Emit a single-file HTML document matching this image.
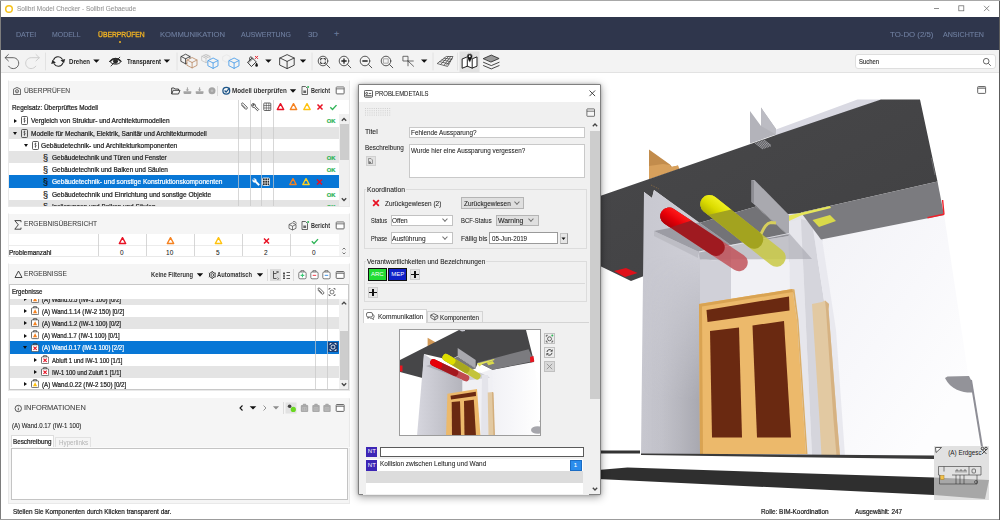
<!DOCTYPE html>
<html lang="de">
<head>
<meta charset="utf-8">
<title>Solibri Model Checker - Solibri Gebaeude</title>
<style>
*{box-sizing:border-box;margin:0;padding:0}
html,body{width:1000px;height:520px;overflow:hidden;background:#fff;font-family:"Liberation Sans",sans-serif;font-size:7.5px;color:#222}
.abs{position:absolute}
#titlebar{position:absolute;left:0;top:0;width:1000px;height:17px;background:#fff}
#titlebar .t{position:absolute;left:17px;top:4.5px;font-size:7px;color:#959595;white-space:nowrap}
#nav{position:absolute;left:0;top:17px;width:1000px;height:33px;background:#2f364c}
#nav span{position:absolute;top:12.5px;font-size:7.5px;color:#6f7f9f;white-space:nowrap}
#nav span.act{color:#f2b322;-webkit-text-stroke:0.3px}
#toolbar{position:absolute;left:0;top:50px;width:1000px;height:23px;background:#f3f3f3;border-bottom:1px solid #e2e2e2}
#main{position:absolute;left:0;top:73px;width:1000px;height:434px;background:#fff}
#leftcol{position:absolute;left:0;top:0;width:0;height:0}
#status{position:absolute;left:0;top:506px;width:1000px;height:14px;background:#fff}
#status span{position:absolute;top:1.8px;font-size:7px;color:#222;white-space:nowrap}
.panel{position:absolute;left:8px;width:340px;background:#fff;border:1px solid #e9e9e9;border-top-color:transparent;background-clip:padding-box}
.phead{position:absolute;left:0;top:0;width:100%;height:21px;background:#f5f5f5}
.ptitle{-webkit-text-stroke:0.05px;position:absolute;left:16px;top:6px;font-size:8px;color:#3a3a3a;white-space:nowrap}
.row{position:absolute;left:0;width:330px;height:12.2px;white-space:nowrap;font-size:6.8px;line-height:12.2px;color:#222}
.row.g{background:#e4e4e4}
.row.sel{background:#0877d6;color:#fff}
.tx{position:absolute;top:0;white-space:nowrap}
.ok{position:absolute;left:317.8px;top:0;font-size:5.8px;font-weight:bold;color:#2fb457}
.vline{position:absolute;width:1px;background:rgba(200,200,200,.72)}
.num{width:48px;text-align:center;font-size:6.5px;-webkit-text-stroke:0.05px}
.ric{position:absolute;top:2px;width:8px;height:8px;border:1px solid #555;border-radius:1.5px;background:#fff}
.ric:before{content:"";position:absolute;left:1.5px;top:-2.5px;width:3px;height:1.5px;border:0.7px solid #555;border-bottom:none;border-radius:1px 1px 0 0}
.ric:after{content:"";position:absolute;left:1px;top:1px;width:4px;height:4px;border-radius:0.5px}
.ric.o:after{background:#f58220}.ric.r:after{background:#e81123}.ric.y:after{background:#ffc20e}
.lb{font-size:6.6px;color:#1a1a1a;white-space:nowrap}
.gl{background:#f0f0f0;padding:0 1px}
.grp{border:1px solid #dcdcdc}
.inp{background:#fff;border:1px solid #c9c9c9;overflow:hidden}
.inp span{position:absolute;font-size:6.6px;color:#1a1a1a;white-space:nowrap}
.cmb{background:#fff;border:1px solid #c2c2c2}
.cmb.g{background:#dfdfdf;border-color:#b4b4b4}
.cmb span{position:absolute;left:3px;top:1.5px;font-size:6.6px;color:#1a1a1a;white-space:nowrap}
.cmb i{position:absolute;right:4.5px;top:1.8px;width:3.9px;height:3.9px;border-right:0.65px solid #6e6e6e;border-bottom:0.65px solid #6e6e6e;transform:rotate(45deg)}
.tag{-webkit-text-stroke:0;border:1.2px solid #111;color:#fff;font-size:6px;line-height:10.6px;text-align:center}
.plus{width:10.5px;height:10.5px;background:#e6e6e6;border:1px solid #cfcfcf}
.plus:before{content:"";position:absolute;left:0.6px;top:3.5px;width:7.3px;height:1.5px;background:#111}
.plus:after{content:"";position:absolute;left:3.5px;top:0.6px;width:1.5px;height:7.3px;background:#111}
.sbtn{width:11px;height:11px;background:#ececec;border:1px solid #c0c0c0}
.nt{width:11px;height:9.700px;background:#3c25b5;color:#fff;font-size:6px;line-height:9.700px;text-align:center;-webkit-text-stroke:0}
.ar{position:absolute;width:0;height:0;border-style:solid}
.row .tx{top:1px}
.row .ok{top:1px}
body{-webkit-text-stroke:0.22px}
#nav span,#titlebar .t{-webkit-text-stroke:0.1px}
[style*="font-weight:bold"]{-webkit-text-stroke:0}
#dlg{-webkit-text-stroke:0.06px}
</style>
</head>
<body>
<div id="titlebar">
 <svg class="abs" style="left:4px;top:4px" width="10" height="10" viewBox="0 0 10 10"><circle cx="5" cy="5" r="3.3" fill="none" stroke="#f5c21c" stroke-width="1.5"/></svg>
 <div style="left:16.8px;transform-origin:0 0;transform:scaleX(0.924)" class="t">Solibri Model Checker - Solibri Gebaeude</div>
 <svg class="abs" style="left:930px;top:2px" width="70" height="13" viewBox="0 0 70 13"><g stroke="#6a6a6a" stroke-width="0.750" fill="none"><path d="M4 6.500h5"/><rect x="28.800" y="3.800" width="5" height="5"/><path d="M54 3.800l5.300 5.300m0-5.300l-5.300 5.300"/></g></svg>
</div>
<div id="nav">
 <span style="left:16.3px;transform-origin:0 0;transform:scaleX(0.940)">DATEI</span>
 <span style="left:52.0px;transform-origin:0 0;transform:scaleX(0.924)">MODELL</span>
 <span class="act" style="left:97.5px;transform-origin:0 0;transform:scaleX(0.904)">ÜBERPRÜFEN</span>
 <span style="left:160.0px;transform-origin:0 0;transform:scaleX(1.022)">KOMMUNIKATION</span>
 <span style="left:241.0px;transform-origin:0 0;transform:scaleX(0.925)">AUSWERTUNG</span>
 <span style="left:307.5px;transform-origin:0 0;transform:scaleX(1.042)">3D</span>
 <span style="left:334px;top:11.800px;font-size:9px">+</span>
 <span style="left:889.5px;transform-origin:0 0;transform:scaleX(1.047)">TO-DO (2/5)</span>
 <span style="left:942.5px;transform-origin:0 0;transform:scaleX(0.946)">ANSICHTEN</span>
 <div class="abs" style="left:119px;top:24px;width:2px;height:2px;border-radius:1px;background:#f2b322"></div>
</div>
<div id="toolbar"><!--TB--><svg class="abs" style="left:0;top:0" width="520" height="23" viewBox="0 50 520 23" fill="none" stroke-linecap="round" stroke-linejoin="round">
 <!-- map active bg -->
 <rect x="459.500" y="51.500" width="20" height="20.500" fill="#e2e2e2" stroke="none"/>
 <!-- undo / redo -->
 <g stroke="#555" stroke-width="0.900">
  <path d="M5.200 57.700H13.200A5.500 5.500 0 1 1 8.600 66.200"/><path d="M8.400 54.500L5.100 57.700L8.400 60.900"/>
 </g>
 <g stroke="#c9c9c9" stroke-width="0.900">
  <path d="M39.200 57.700H31.200A5.500 5.500 0 1 0 35.800 66.200"/><path d="M36 54.500L39.300 57.700L36 60.900"/>
 </g>
 <path d="M45.500 53v17M177 53v17M312 53v17M433 53v17M457.500 53v17" stroke="#e2e2e2" stroke-width="1"/>
 <!-- rotate -->
 <g stroke="#2a2a2a" stroke-width="1.100">
  <path d="M53.600 59.900A4.800 4.800 0 0 1 62.300 59.200"/><path d="M62.800 63.100A4.800 4.800 0 0 1 54.100 63.800"/>
 </g>
 <path d="M60.500 60.300L65.200 58.900L64 63.200zM55.900 62.700L51.200 64.100L52.400 59.800z" fill="#2a2a2a" stroke="none"/>
 <!-- eye -->
 <g stroke="#2a2a2a" stroke-width="1">
  <path d="M109.800 61.500c2.400-4 9-4 11.400 0c-2.400 3.600-9 3.600-11.400 0z"/><path d="M110.500 61c2.400-3.200 7.600-3.200 10 0" stroke-width="1.600"/><circle cx="115.500" cy="61.300" r="2" fill="#2a2a2a"/><path d="M111 66l8.800-8.800" stroke-width="0.900"/>
 </g>
 <!-- cubes -->
 <g stroke-width="0.800">
  <g stroke="#2b2b2b"><path d="M181.200 56.500l4.400-2.300l4.400 2.300v5l-4.400 2.300l-4.400-2.300zM181.200 56.500l4.400 2.300l4.400-2.300M185.600 58.800v5"/></g>
  <g stroke="#b98660" fill="#f3f3f3"><path d="M187.200 60l4.900-2.500l4.900 2.500v5.400l-4.900 2.500l-4.900-2.500z"/><path d="M187.200 60l4.900 2.500l4.900-2.500M192.100 62.500v5.400"/></g>
  <g stroke="#bdbdbd" stroke-width="0.700"><path d="M202 56.300l4-2l4 2v4.400l-4 2l-4-2zM202 56.300l4 2l4-2M206 58.300v4.400M204 55.300l4 2M208 55.300l-4 2"/></g>
  <g stroke="#3b96e8" fill="#f3f3f3"><path d="M208.200 60.500l4.900-2.500l4.900 2.500v5.400l-4.900 2.500l-4.900-2.500z"/><path d="M208.200 60.500l4.900 2.500l4.900-2.500M213.100 63v5.400"/></g>
  <g stroke="#e4e4e4" stroke-width="0.700"><path d="M223 56.500l3.600-1.800l3.600 1.800v4l-3.600 1.800l-3.600-1.800z"/></g>
  <g stroke="#3b96e8" fill="#f3f3f3"><path d="M229.200 60.500l4.900-2.500l4.900 2.500v5.400l-4.900 2.500l-4.900-2.500z"/><path d="M229.200 60.500l4.900 2.500l4.900-2.500M234.100 63v5.400"/></g>
 </g>
 <!-- hand -->
 <g stroke="#2b2b2b" stroke-width="0.900">
  <path d="M247.800 62L252.300 57.900L256.200 61.900L251.700 66.300z" fill="#f3f3f3"/>
  <path d="M249.800 60.200C248.800 57.300 250.600 55.600 252.200 57.800"/>
  <path d="M248.600 62.700L252.800 58.800" stroke-width="0.600"/>
 </g>
 <path d="M256.600 62.500c1 1.500 1.300 2.300 1.300 3a1.300 1.300 0 0 1-2.600 0c0-0.700 0.300-1.500 1.300-3z" fill="#1a1a1a" stroke="none"/>
 <path d="M255.300 56.200l2.400 2.400m0-2.400l-2.400 2.400" stroke="#e8222e" stroke-width="1"/>
 <!-- big cube -->
 <g stroke="#333" stroke-width="0.900"><path d="M280 58l7.100-3.400l7.100 3.400v7.200l-7.100 3.400l-7.100-3.400zM280 58l7.100 3.400l7.100-3.400M287.100 61.400v7.200"/></g>
 <!-- zoom icons -->
 <g stroke="#444" stroke-width="0.900">
  <circle cx="323" cy="61" r="4.800"/><path d="M326.600 64.600l3.200 3.200"/>
  <path d="M320.700 60v-1.400h1.400M325.300 60v-1.400h-1.400M320.700 62v1.400h1.400M325.300 62v1.400h-1.400" stroke-width="1" stroke="#2a2a2a"/>
  <circle cx="344" cy="61" r="4.800"/><path d="M347.600 64.600l3.200 3.200"/><path d="M341.800 61h4.400M344 58.800v4.400" stroke-width="1.300" stroke="#222"/>
  <circle cx="365" cy="61" r="4.800"/><path d="M368.600 64.600l3.200 3.200"/><path d="M362.800 61h4.400" stroke-width="1.300" stroke="#222"/>
  <circle cx="386" cy="61" r="4.800"/><path d="M389.600 64.600l3.200 3.200"/><rect x="383.800" y="58.800" width="4.400" height="4.400" stroke-width="0.700" stroke="#888"/>
 </g>
 <!-- axis picker -->
 <g stroke="#4a4a4a" stroke-width="0.800"><rect x="403.300" y="56.300" width="4.700" height="4.700"/><path d="M408 61l5.600 5.300M408 61h5.300M408 61v4.800"/></g>
 <!-- grid plane -->
 <g stroke="#3a3a3a" stroke-width="0.700"><path d="M437.500 63.300l8.800-6.800h6.700l-5.200 9.600z"/><path d="M439.700 61.600l9.300 2.300M441.900 59.900l8.500 1.700M444.100 58.200l7.700 1.100M448.500 56.500l-7.600 7.700M450.700 56.500l-6.500 8.600M452 58.500l-5.500 6.500"/></g>
 <!-- map (active) -->
 <g stroke="#222" stroke-width="1"><path d="M462.500 58.800l4.800-1.900v9.300l-4.800 1.900zM467.300 56.900l4.900 1.900l4.800-1.900v9.300l-4.800 1.900l-4.900-1.900M472.200 58.800v9.300" fill="#fff"/></g>
 <path d="M469.700 53.600a2.800 2.800 0 0 1 2.800 2.800c0 2-2.800 5.800-2.800 5.800s-2.800-3.800-2.800-5.800a2.800 2.800 0 0 1 2.800-2.800z" fill="#111" stroke="#e3e3e3" stroke-width="0.500"/><circle cx="469.700" cy="56.300" r="1" fill="#fff" stroke="none"/>
 <!-- layers -->
 <g stroke="#333" stroke-width="0.900"><path d="M483.500 62.300l7.800 3.300l7.800-3.300M483.500 65.600l7.800 3.300l7.800-3.300" /><path d="M483.500 58.500l7.800-3.400l7.800 3.400l-7.800 3.400z" fill="#9a9a9a"/></g>
 <!-- dropdown arrows -->
 <g fill="#111" stroke="none">
  <path d="M93.200 59.500h6.400l-3.200 3.300zM163.700 59.500h6.400l-3.200 3.300zM265.200 59.500h6.400l-3.200 3.300zM299.800 59.500h6.400l-3.200 3.300zM421 59.500h6.400l-3.200 3.300z"/>
 </g>
</svg>
<span class="abs" style="left:69.0px;top:7.500px;font-size:6.800px;font-weight:bold;color:#222;transform-origin:0 0;transform:scaleX(0.897)">Drehen</span>
<span class="abs" style="left:126.8px;top:7.500px;font-size:6.800px;font-weight:bold;color:#222;transform-origin:0 0;transform:scaleX(0.874)">Transparent</span>
<div class="abs" style="left:855px;top:4px;width:141px;height:15px;background:#fff;border:1px solid #dedede;border-radius:3px"></div>
<span class="abs" style="left:859.0px;top:8px;font-size:6.500px;color:#444;transform-origin:0 0;transform:scaleX(0.907)">Suchen</span>
<svg class="abs" style="left:982px;top:7px" width="10" height="10" viewBox="0 0 10 10" fill="none" stroke="#555" stroke-width="0.900"><circle cx="4.200" cy="4.200" r="2.800"/><path d="M6.300 6.300l2.500 2.500"/></svg>
<!--/TB--></div>
<div id="main"><!--SC--><svg class="abs" style="left:350px;top:0" width="650" height="434" viewBox="350 73 650 434">
 <defs>
  <linearGradient id="gWallL" x1="0" y1="0" x2="1" y2="0"><stop offset="0" stop-color="#c8c8d0"/><stop offset="1" stop-color="#ceced6"/></linearGradient><linearGradient id="gWallD" x1="0" y1="0" x2="1" y2="0"><stop offset="0" stop-color="#a2a2aa" stop-opacity="0"/><stop offset="0.350" stop-color="#a8a8b0" stop-opacity="0.250"/><stop offset="1" stop-color="#a8a8b0" stop-opacity="1"/></linearGradient><linearGradient id="gMaskV" gradientUnits="userSpaceOnUse" x1="0" y1="255" x2="0" y2="400"><stop offset="0" stop-color="#000"/><stop offset="1" stop-color="#fff"/></linearGradient><mask id="mWall" maskUnits="userSpaceOnUse" x="640" y="190" width="62" height="270"><rect x="640" y="190" width="62" height="270" fill="url(#gMaskV)"/></mask>
  <linearGradient id="gWallLT" x1="0" y1="0" x2="0" y2="1"><stop offset="0" stop-color="#d4d4dc" stop-opacity="0.9"/><stop offset="1" stop-color="#d4d4dc" stop-opacity="0"/></linearGradient>
  <linearGradient id="gWallR" x1="0" y1="0" x2="1" y2="0.6"><stop offset="0" stop-color="#eeeef3"/><stop offset="0.7" stop-color="#f8f8fb"/><stop offset="1" stop-color="#fdfdfe"/></linearGradient>
  <linearGradient id="gSlab" x1="0" y1="0" x2="1" y2="1"><stop offset="0" stop-color="#48484a"/><stop offset="1" stop-color="#404042"/></linearGradient>
  <linearGradient id="gRed" gradientUnits="userSpaceOnUse" x1="664" y1="224" x2="674" y2="209"><stop offset="0" stop-color="#b00008"/><stop offset="0.5" stop-color="#e60008"/><stop offset="1" stop-color="#ff1a1a"/></linearGradient>
  <linearGradient id="gYel" gradientUnits="userSpaceOnUse" x1="704" y1="212" x2="715" y2="197"><stop offset="0" stop-color="#b4b400"/><stop offset="0.5" stop-color="#dcdc00"/><stop offset="1" stop-color="#f0f020"/></linearGradient>
  <clipPath id="cpY"><path d="M690 170H770V200.300L690 219.200z"/></clipPath><clipPath id="cpR"><path d="M650 190H705V216L650 234.300z"/></clipPath>
 </defs>
 <!-- far/right wall -->
 <path d="M821 239L944 214L975 420L981 456L700 454L700 245z" fill="url(#gWallR)"/>
 <!-- things behind slab -->
 <path d="M776 129.500L857.500 99.500H882L776 136z" fill="#d9d9e2"/>
 <path d="M750 111V143.500L776 134.500V129L761 107.500V126z" fill="#b3b3ba"/>
 <path d="M761 126V107.500L776 129V134.500z" fill="#bcbcc3"/>
 <path d="M649 149.500V179L679 169L678 165.500L672 167L670 164.500z" fill="#c28c4c"/>
 <path d="M649 166l14-2l7 1l0.500 2l7.500-1.500l1 3.500l-30 10z" fill="#d7a05c"/>
 <!-- dark slab -->
 <path d="M600 196L752 143.500L776 135L881 99.500H920L937.500 181.500L801 212.500L789 236L756 206.500L699 223L654 190L652 198L644 192V276L631 281L600 266z" fill="url(#gSlab)"/>
 <g stroke="#b4b4ba" stroke-width="0.800"><path d="M755 143l8 6M756.500 142.500l8 6M758 142l8 6M759.500 141.500l8 6M761 141l8 6M762.500 140.500l8 6M764 140l7 5.500"/></g>
 <path d="M651 185l8 4" stroke="#b08040" stroke-width="0.500" stroke-dasharray="1.500 1.200"/>
 <path d="M931.500 158L935 175" stroke="#77777a" stroke-width="0.800"/>
 <!-- red marker on slab left -->
 <path d="M614 271L626 268L637.500 273L625 277z" fill="#e0101a"/>
 <!-- left wall -->
 <path d="M644 192L652 198L654 190L700 223V454H641z" fill="url(#gWallL)"/>
 <path d="M644 192L652 198L654 190L700 223V454H641z" fill="url(#gWallD)" mask="url(#mWall)"/>
 <!-- underside recess -->
 <path d="M699 223L756 206.500L789 236L730 245.500z" fill="#737377"/>
 <path d="M700 223L731 245L731 262L700 259z" fill="#c2c2ca"/>
 <!-- reveal / far wall pieces -->
 <path d="M700 259L731 262L731 300L700 305z" fill="#d0d0d8"/>
 <path d="M731 245L789 236L790 290L731 300z" fill="#f1f1f5"/>
 <!-- pillar strips -->
 <path d="M788 214L803 213L823 240L812 262L789 262z" fill="#e3e3e9"/>
 <path d="M789 222L801 219L812 456H797L790 300z" fill="#e6e6ec"/>
 <path d="M801 219L812 222L827 320L835 456H812z" fill="#d5d5dc"/>
 <path d="M812 222L822 239L836 330L845 456H835L827 320z" fill="#e9e9ef"/>
 <!-- tan strip -->
 <path d="M812 304L822 302L825 300.500L829 304L828.500 309L837 420L840 456H821.500L819.500 420z" fill="#e2c9a2"/>
 <path d="M825 300.500L829 304L828.500 309L837 420L840 456H836.500L833.500 420L826 310z" fill="#d6b282"/>
 <!-- front grey band of slab -->
 <path d="M801 212.500L937.500 181.500L944 215L821 239.500z" fill="#7b7b7f"/>
 <path d="M787 216L830 206L831 208L801 215.500L789 221z" fill="#e6e65a"/>
 <path d="M812.500 220L830 215L836 221L819 227z" fill="#d9d94a"/>
 <path d="M927.500 217.800L944 214.300M942.600 200L944 214.500" stroke="#f0202a" stroke-width="1.400" fill="none"/>
 <!-- grey vertical panel -->
 <path d="M751.500 180V202L789 236V215L754.500 180z" fill="#a9a9af"/>
 <path d="M751.500 180V202L754 204V181z" fill="#8e8e94"/>
 <!-- semi-transparent horizontal slab -->
 <path d="M654 231L699 222.500L731 245L698 251.500z" fill="#77777d" fill-opacity="0.550"/>
 <path d="M654 231L698 251.500V258L654 236z" fill="#b9b9c1" fill-opacity="0.800"/>
 <path d="M698 251.500L789 233L812 259L700 259.500z" fill="#a6a6ae" fill-opacity="0.620"/>
 <path d="M699 252L789 233.500" stroke="#f4f4f8" stroke-width="0.700"/>
 <!-- small yellow pipe -->
 <path d="M760 236C764 228 766 223 771 222.500L776 223" fill="none" stroke="#d6ce5c" stroke-width="3"/>
 <!-- yellow pipe -->
 <path d="M709.500 204.200L776.500 257.500" stroke="#c9c944" stroke-opacity="0.850" stroke-width="18.500" stroke-linecap="round"/>
 <path d="M709.500 204.200L754 239.500" stroke="#a3a31f" stroke-width="18.500" stroke-linecap="round"/>
 <g clip-path="url(#cpY)"><path d="M709.500 204.200L754 239.500" stroke="url(#gYel)" stroke-width="18.500" stroke-linecap="round"/></g>
 <!-- red pipe -->
 <path d="M669 216.300L739 262.500" stroke="#c2535a" stroke-opacity="0.850" stroke-width="17.500" stroke-linecap="round"/>
 <path d="M669 216.300L716 247.300" stroke="#9f1a20" stroke-width="17.500" stroke-linecap="round"/>
 <g clip-path="url(#cpR)"><path d="M669 216.300L716 247.300" stroke="url(#gRed)" stroke-width="17.500" stroke-linecap="round"/></g>
 <!-- door -->
 <path d="M699 304L792.500 289L797 320L806 454H700z" fill="#ecb96b"/>
 <path d="M699 304L792.500 289L793 292L702 306.500L703 454H700z" fill="#d9a352"/>
 <path d="M706.500 310L789 296.500L789.500 310.500L707.500 322z" fill="#6a2911"/>
 <path d="M710 331L739 327.500L742 437.500H712z" fill="#6a2911"/>
 <path d="M752.500 325.500L784 321L791 437.500H757z" fill="#6a2911"/>
 <path d="M792.500 289L794.500 289.500L798.500 320L807.500 454H806L797 320z" fill="#dcae66"/>
 <!-- lamp -->
 <path d="M945 378L947.500 376.500L969 376L971 380L972.500 392.500C965 393 951 391 945 378z" fill="#939399"/>
 <path d="M971 380L982 447" stroke="#8e8e96" stroke-width="2"/>
 <!-- floor lines -->
 <path d="M598 450.500H640V453.500H598z" fill="#333"/>
 <path d="M641 453.500L934 455.500V459L641 455z" fill="#3a3a3a"/>
 <path d="M598 470L627.500 467.500L934 477.500L989 480L985 499L934 495L598 479z" fill="#2f2f2f"/>
 <!-- minimap overlay -->
 <rect x="934" y="446" width="55" height="54" fill="#d6d6d6" fill-opacity="0.720"/>
 <path d="M935.500 447.500h6l-5.500 5z" fill="#fff" stroke="#222" stroke-width="0.700"/>
 <g fill="none" stroke="#333" stroke-width="0.600"><path d="M938.500 466.500h42.500v8.500h-4v9h-37.500v-9h-1z"/><path d="M944 466.500v5M956 475v9M960 475v9M964 475v9M969 466.500v8.500M952 475h25"/><rect x="972" y="469" width="3.500" height="4" rx="1"/><path d="M956 472.500v-2.500h2v2.500M960 472.500v-2.500h2v2.500M964 472.500v-2.500h2v2.500"/><circle cx="976" cy="482" r="1.500"/></g>
 <rect x="940.500" y="475.500" width="3.500" height="4" fill="#f2c24a" stroke="#a87a1a" stroke-width="0.500"/>
 <text x="948.2" y="454.800" font-family="Liberation Sans, sans-serif" font-size="6.800" textLength="33.500" lengthAdjust="spacingAndGlyphs" fill="#222">(A) Erdgesc</text>
 <g stroke="#222" stroke-width="0.800" fill="none"><circle cx="982.500" cy="448.500" r="1.300"/><circle cx="986" cy="448.500" r="1.300"/><path d="M982 454l4.500-4.500M986.500 454l-4.500-4.500"/></g>
</svg>
<svg class="abs" style="left:975.5px;top:10.8px" width="12" height="12" viewBox="0 0 12 12"><use href="#i-win" x="1.500" y="2"/></svg>
<!--/SC--></div>
<div id="leftcol"><!--L1--><svg width="0" height="0" style="position:absolute">
 <defs>
  <g id="i-win"><rect x="0.200" y="0.500" width="7.900" height="6.900" rx="0.700" fill="#fff" stroke="#555" stroke-width="0.900"/><path d="M0.600 1.500h7.100" stroke="#c8c8c8" stroke-width="1.100"/><path d="M0.200 2.400h7.900" stroke="#555" stroke-width="0.700"/></g>
  <g id="i-tri"><path d="M4 1.200L7.200 7H0.800z" fill="none" stroke-width="1.400" stroke-linejoin="round"/></g>
  <g id="i-x"><path d="M1 1l5 5m0-5l-5 5" fill="none" stroke="#e81123" stroke-width="1.500"/></g>
  <g id="i-chk"><path d="M0.800 3.800l2.200 2.200l4-4.400" fill="none" stroke="#2fb457" stroke-width="1.400"/></g>
  <g id="i-rep"><path d="M0.500 0.500h3.500l2 2v6h-5.500z" fill="none" stroke="#444" stroke-width="0.800"/><path d="M1.800 4.500h2.800v2.500h-2.800z" fill="#666"/><circle cx="6.600" cy="1" r="1" fill="#2fb457"/></g>
  <g id="i-rs"><rect x="0.500" y="0.500" width="6" height="8" rx="1" fill="none" stroke="#333" stroke-width="0.800"/><path d="M4.300 2.500c-1.500-0.800-2 0.800-0.800 1.400c1.200 0.600 0.800 2.200-0.800 1.400M3.500 1.800v5" fill="none" stroke="#333" stroke-width="0.600"/></g>
  <g id="i-clip"><path d="M1.500 2.200l3.800 3.800a1.300 1.300 0 0 0 1.800-1.800l-4-4a0.900 0.900 0 0 0-1.300 1.300l3.600 3.600" fill="none" stroke="#4a4a4a" stroke-width="0.850" transform="translate(0 1)"/></g>
  <g id="i-wr"><path d="M1 1.300a2 2 0 0 1 2.800 2.300l3.400 3.400l-1.200 1.200l-3.400-3.400a2 2 0 0 1-2.300-2.800l1.300 1.300l1-1z" fill="none" stroke="#3a3a3a" stroke-width="0.900"/></g>
  <g id="i-tbl"><rect x="0.500" y="0.500" width="7" height="7.500" rx="0.800" fill="none" stroke="#444" stroke-width="0.800"/><path d="M0.500 3h7M0.500 5.500h7M3 0.500v7.500M5.500 0.500v7.500" stroke="#444" stroke-width="0.600"/></g>
  <g id="i-fold"><rect x="0.500" y="1.500" width="7" height="6.500" rx="0.800" fill="#fff" stroke="#555" stroke-width="0.700"/><path d="M2 1.500v-1h4v1" fill="none" stroke="#555" stroke-width="0.700"/></g>
  <g id="i-cb"><rect x="0.300" y="1.500" width="7.400" height="7" rx="1.100" fill="#a8a8a8"/><rect x="2.300" y="0.200" width="3.400" height="2" rx="0.600" fill="#a8a8a8"/><path d="M2 4h4v3.200h-4zM2 5.600h4M4 4v3.200" stroke="#c4c4c4" stroke-width="0.500" fill="none"/></g>
  <g id="i-cbo"><rect x="0.500" y="2" width="8" height="7.500" rx="1.200" fill="#fff" stroke="#333" stroke-width="0.800"/><path d="M2.800 2v-1.300h3.400v1.300" fill="none" stroke="#333" stroke-width="0.800"/><path d="M4.500 3.600l2.300 4.300h-4.600z" fill="#f58220"/></g>
  <g id="i-cby"><rect x="0.500" y="2" width="8" height="7.500" rx="1.200" fill="#fff" stroke="#333" stroke-width="0.800"/><path d="M2.800 2v-1.300h3.400v1.300" fill="none" stroke="#333" stroke-width="0.800"/><path d="M4.500 3.600l2.300 4.300h-4.600z" fill="#ffc20e"/></g>
  <g id="i-cbr"><rect x="0.500" y="2" width="8" height="7.500" rx="1.200" fill="#fff" stroke="#333" stroke-width="0.800"/><path d="M2.800 2v-1.300h3.400v1.300" fill="none" stroke="#333" stroke-width="0.800"/><path d="M2.700 4l3.600 3.600m0-3.600l-3.600 3.600" fill="none" stroke="#e81123" stroke-width="1.200"/></g>
 </defs>
</svg>
<!-- ============ PANEL 1 ============ -->
<div class="panel" style="left:8px;top:80px;width:342px;height:126.500px;overflow:hidden">
 <div class="phead" style="height:19.2px"></div>
 <svg class="abs" style="left:4px;top:5.5px" width="8" height="8" viewBox="0 0 9 9" fill="none" stroke="#444" stroke-width="0.900"><path d="M0.500 2.500l4-2l4 2v6h-8z"/><circle cx="4.500" cy="4.800" r="1.800"/><path d="M3.600 4.800l0.700 0.700l1.200-1.300" stroke-width="0.600"/></svg>
 <div class="ptitle" id="t1" style="left:15.0px;top:4.800px;transform-origin:0 0;transform:scaleX(0.838)">ÜBERPRÜFEN</div>
 <!-- header icons -->
 <svg class="abs" style="left:160px;top:4px" width="182" height="12" viewBox="168 85 182 12" fill="none">
  <path d="M170.700 94v-6h2.400l1 1h3.400v1.300M170.700 94l1.500-3.700h6.800l-1.500 3.700z" stroke="#333" stroke-width="0.900" stroke-linejoin="round"/>
  <g fill="#a4a4a4"><path d="M182.500 91.300h7.800v1.500q0 1.200-1.200 1.200h-5.400q-1.200 0-1.200-1.200z"/><rect x="185.900" y="87.300" width="1" height="3.500"/><path d="M184.600 89.400h3.600l-1.800 1.900z"/>
  <path d="M194.700 91.300h7.800v1.500q0 1.200-1.200 1.200h-5.400q-1.200 0-1.200-1.200z"/><rect x="198.100" y="87.300" width="1" height="3.500"/><path d="M196.800 89.400h3.600l-1.800 1.900z"/><circle cx="211" cy="90.700" r="3.500"/></g><circle cx="211" cy="90.700" r="1.300" fill="#bdbdbd"/>
  <path d="M216.500 86v10" stroke="#dcdcdc" stroke-width="1"/>
  <circle cx="225.300" cy="90.800" r="3.400" stroke="#1d5588" stroke-width="1.300"/><path d="M223.600 90.500l1.500 1.600l3.600-4.200" stroke="#1d5588" stroke-width="1.300"/>
  <path d="M288.800 89.300h6.400l-3.200 3.400z" fill="#111"/>
  <use href="#i-rep" x="300.500" y="86"/>
  <use href="#i-win" x="335" y="86.500"/>
 </svg>
 <span class="abs" id="t1a" style="font-weight:bold;left:222.5px;top:6px;font-size:6.500px;color:#333;white-space:nowrap;transform-origin:0 0;transform:scaleX(0.965)">Modell überprüfen</span>
 <span class="abs" id="t1b" style="font-weight:bold;left:302.4px;top:6px;font-size:6.500px;color:#333;white-space:nowrap;transform-origin:0 0;transform:scaleX(0.852)">Bericht</span>
 <!-- column header row -->
 <div class="abs" style="left:0;top:19.2px;width:330px;height:14.2px;background:#fff"></div>
 <span class="abs" id="t1c" style="left:2.8px;top:23px;font-size:6.800px;color:#222;white-space:nowrap;transform-origin:0 0;transform:scaleX(0.941)">Regelsatz: Überprüftes Modell</span>
 <svg class="abs" style="left:230px;top:21px" width="100" height="10" viewBox="238 102 100 10" fill="none">
  <use href="#i-clip" x="239" y="102"/><use href="#i-wr" x="250.500" y="102.500"/><use href="#i-tbl" x="262.300" y="102.500"/>
  <use href="#i-tri" x="275.500" y="102.500" stroke="#e81123"/><use href="#i-tri" x="288.500" y="102.500" stroke="#f58220"/><use href="#i-tri" x="302" y="102.500" stroke="#ffc20e"/>
  <use href="#i-x" x="315.500" y="103.500"/><use href="#i-chk" x="328.500" y="103.500"/>
 </svg>
 <!-- rows -->
 <div class="row" style="top:33.4px"><i class="ar" style="left:4.5px;top:4.4px;border-width:2.2px 0 2.2px 3.6px;border-color:transparent transparent transparent #111"></i><svg class="abs" style="left:12px;top:2px" width="7" height="9"><use href="#i-rs"/></svg><span class="tx" id="r1" style="left:21.6px;transform-origin:0 0;transform:scaleX(0.965)">Vergleich von Struktur- und Architekturmodellen</span><span class="ok">OK</span></div>
 <div class="row g" style="top:45.6px"><i class="ar" style="left:4.0px;top:5.1px;border-width:3.4px 2.3px 0 2.3px;border-color:#111 transparent transparent transparent"></i><svg class="abs" style="left:12px;top:2px" width="7" height="9"><use href="#i-rs"/></svg><span class="tx" id="r2" style="left:21.6px;transform-origin:0 0;transform:scaleX(0.959)">Modelle für Mechanik, Elektrik, Sanitär und Architekturmodell</span></div>
 <div class="row" style="top:57.8px"><i class="ar" style="left:15.0px;top:5.1px;border-width:3.4px 2.3px 0 2.3px;border-color:#111 transparent transparent transparent"></i><svg class="abs" style="left:23px;top:2px" width="7" height="9"><use href="#i-rs"/></svg><span class="tx" id="r3" style="left:31.7px;transform-origin:0 0;transform:scaleX(0.972)">Gebäudetechnik- und Architekturkomponenten</span></div>
 <div class="row g" style="top:70.0px"><span class="tx" style="left:34px;font-size:9px">§</span><span class="tx" id="r4" style="left:42.5px;transform-origin:0 0;transform:scaleX(0.953)">Gebäudetechnik und Türen und Fenster</span><span class="ok">OK</span></div>
 <div class="row" style="top:82.2px"><span class="tx" style="left:34px;font-size:9px">§</span><span class="tx" id="r5" style="left:42.5px;transform-origin:0 0;transform:scaleX(0.952)">Gebäudetechnik und Balken und Säulen</span><span class="ok">OK</span></div>
 <div class="row sel" style="top:94.4px"><span class="tx" style="left:34px;font-size:9px;color:#111">§</span><span class="tx" id="r6" style="left:42.5px;transform-origin:0 0;transform:scaleX(0.966)">Gebäudetechnik- und sonstige Konstruktionskomponenten</span>
  <svg class="abs" style="left:242px;top:1.500px" width="90" height="9" viewBox="250 0 90 9" fill="none"><g transform="translate(251.500 0.500)"><path d="M1 1.300a2 2 0 0 1 2.800 2.300l3.400 3.400l-1.200 1.200l-3.400-3.400a2 2 0 0 1-2.300-2.800l1.300 1.300l1-1z" fill="#fff" stroke="#fff" stroke-width="0.400"/></g><g transform="translate(261 0.500)"><rect x="0.500" y="0.500" width="7" height="7.500" rx="0.800" fill="#2a2a2a" stroke="#fff" stroke-width="0.800"/><path d="M0.500 3h7M0.500 5.500h7M3 0.500v7.500M5.500 0.500v7.500" stroke="#fff" stroke-width="0.600"/></g>
  <use href="#i-tri" x="288" y="0.500" stroke="#f58220"/><use href="#i-tri" x="301" y="0.500" stroke="#ffd21e"/><use href="#i-x" x="315" y="1.500"/></svg></div>
 <div class="row" style="top:106.6px"><span class="tx" style="left:34px;font-size:9px">§</span><span class="tx" id="r7" style="left:42.5px;transform-origin:0 0;transform:scaleX(0.968)">Gebäudetechnik und Einrichtung und sonstige Objekte</span><span class="ok">OK</span></div>
 <div class="row g" style="top:118.8px;height:7px;overflow:hidden"><span class="tx" style="left:34px;font-size:9px;top:1px">§</span><span class="tx" style="left:42.5px;top:1px;transform-origin:0 0;transform:scaleX(0.948)">Isolierungen und Balken und Säulen</span><span class="ok" style="top:1px">OK</span></div>
 <!-- column lines -->
 <div class="vline" style="left:229px;top:19px;height:107px"></div><div class="vline" style="left:240.6px;top:19px;height:107px"></div><div class="vline" style="left:252.4px;top:19px;height:107px"></div><div class="vline" style="left:264px;top:19px;height:107px"></div>
 <!-- scrollbar -->
 <div class="abs" style="left:330px;top:33.4px;width:10px;height:92.6px;background:#f0f0f0"></div>
 <div class="abs" style="left:331px;top:43px;width:8.500px;height:36px;background:#cdcdcd"></div>
 <svg class="abs" style="left:330px;top:33px" width="10" height="92" viewBox="0 0 10 92" fill="none" stroke="#444" stroke-width="1.300"><path d="M2.800 6.700l2.200-2.200l2.200 2.200M2.800 84.300l2.200 2.200l2.200-2.200"/></svg>
</div>
<!--/L1--><!--L2--><!-- ============ PANEL 2 ============ -->
<div class="panel" style="left:8px;top:213.4px;width:342px;height:44px">
 <div class="phead" style="height:19.5px"></div>
 <svg class="abs" style="left:4.5px;top:5.5px" width="8" height="10" viewBox="0 0 8 10" fill="none" stroke="#333" stroke-width="0.9"><path d="M7 2.200V0.600H0.800L4.300 4.800L0.800 9.200H7V7.600"/></svg>
 <div class="ptitle" id="t2" style="left:14.8px;top:4.800px;transform-origin:0 0;transform:scaleX(0.835)">ERGEBNISÜBERSICHT</div>
 <svg class="abs" style="left:270px;top:5.300px" width="72" height="12" viewBox="278 218 72 12" fill="none">
  <g stroke="#444" stroke-width="0.700"><path d="M288 222.500l3.500-1.700l3.500 1.700v3.800l-3.500 1.700l-3.500-1.700zM288 222.500l3.500 1.700l3.500-1.700M291.500 224.200v3.800"/><path d="M292 219.500a3 3 0 0 1 3.500 2" /></g>
  <use href="#i-rep" x="300.500" y="219"/>
  <use href="#i-win" x="335" y="219.500"/>
 </svg>
 <span class="abs" id="t2b" style="font-weight:bold;left:302.4px;top:7.300px;font-size:6.500px;color:#333;white-space:nowrap;transform-origin:0 0;transform:scaleX(0.852)">Bericht</span>
 <div class="abs" style="left:0;top:19.5px;width:330px;height:22.5px;background:#fff"></div>
 <div class="abs" style="left:0;top:31px;width:330px;height:1px;background:#ececec"></div>
 <div class="abs" style="left:330px;top:19.5px;width:10px;height:22.5px;background:#f5f5f5"></div>
 <svg class="abs" style="left:330px;top:30.5px" width="10" height="12" viewBox="0 0 10 12" fill="none" stroke="#555" stroke-width="0.800"><path d="M3.500 4.500l1.500-1.500l1.500 1.500M3.500 7.500l1.500 1.500l1.500-1.500"/></svg>
 <div class="vline" style="left:88.7px;top:19.5px;height:22.5px"></div><div class="vline" style="left:136.7px;top:19.5px;height:22.5px"></div><div class="vline" style="left:184.7px;top:19.5px;height:22.5px"></div><div class="vline" style="left:232.7px;top:19.5px;height:22.5px"></div><div class="vline" style="left:280.7px;top:19.5px;height:22.5px"></div>
 <svg class="abs" style="left:88.700px;top:22px" width="240" height="10" viewBox="98 0 240 10" fill="none">
  <use href="#i-tri" x="118.500" y="0.500" stroke="#e81123"/><use href="#i-tri" x="166.500" y="0.500" stroke="#f58220"/><use href="#i-tri" x="214.500" y="0.500" stroke="#ffc20e"/>
  <use href="#i-x" x="263" y="1.500"/><use href="#i-chk" x="311" y="1.500"/>
 </svg>
 <span class="abs" style="left:0.0px;top:35px;font-size:6.500px;white-space:nowrap;transform-origin:0 0;transform:scaleX(0.980)">Problemanzahl</span>
 <span class="abs num" style="left:88.7px;top:35px">0</span><span class="abs num" style="left:136.7px;top:35px">10</span><span class="abs num" style="left:184.7px;top:35px">5</span><span class="abs num" style="left:232.7px;top:35px">2</span><span class="abs num" style="left:280.7px;top:35px">0</span>
</div>
<!-- ============ PANEL 3 ============ -->
<div class="panel" style="left:8px;top:263.2px;width:342px;height:127.4px">
 <div class="phead" style="height:20px"></div>
 <svg class="abs" style="left:5px;top:5.500px" width="9" height="9" viewBox="0 0 9 9"><path d="M4.500 1L8 7.500H1z" fill="none" stroke="#333" stroke-width="0.900" stroke-linejoin="round"/></svg>
 <div class="ptitle" id="t3" style="left:14.8px;top:4.800px;transform-origin:0 0;transform:scaleX(0.823)">ERGEBNISSE</div>
 <span class="abs" id="t3a" style="font-weight:bold;left:141.5px;top:7px;font-size:6.500px;color:#333;white-space:nowrap;transform-origin:0 0;transform:scaleX(0.890)">Keine Filterung</span>
 <span class="abs" id="t3b" style="font-weight:bold;left:208.0px;top:7px;font-size:6.500px;color:#333;white-space:nowrap;transform-origin:0 0;transform:scaleX(0.889)">Automatisch</span>
 <svg class="abs" style="left:188px;top:4px" width="154" height="14" viewBox="196 268 154 14" fill="none">
  <path d="M195.800 273.300h6.400l-3.200 3.400zM255.800 273.300h6.400l-3.200 3.400z" fill="#111"/>
  <g stroke="#333" stroke-width="0.800"><circle cx="211.300" cy="275" r="1.400"/><path d="M211.300 271.800l2.800 1.600v3.200l-2.800 1.600l-2.800-1.600v-3.200z" stroke-width="0.900"/><path d="M211.300 271v1M211.300 278v1M207.800 273l0.800 0.500M214.800 273l-0.800 0.500M207.800 277l0.800-0.500M214.800 277l-0.800-0.500" stroke-width="0.800"/></g>
  <path d="M266.500 269v12M292.500 269v12" stroke="#dcdcdc" stroke-width="1"/>
  <rect x="269" y="269" width="11" height="12" fill="#dcdcdc"/>
  <g stroke="#333" stroke-width="0.800"><path d="M272.500 271v7.500h3M272.500 273.500h3M275.500 271l2 2M277.500 271l-2 2"/><path d="M276.500 277.500l1.200 1.200l-1.200 1.200" stroke-width="0.600"/></g>
  <g stroke="#333" stroke-width="0.800"><path d="M283 272v7M282 273.500h2M282 276h2M282 278.500h2M285.500 272.500h3.500M285.500 275.500h3.500M285.500 278.500h3.500"/></g>
  <g stroke="#5a5a5a" stroke-width="0.800"><rect x="297.800" y="272" width="7.300" height="6.800" rx="1.300" fill="#fff"/><path d="M299.900 272v-1.300h3.100v1.300"/><path d="M299.600 275.400h3.700M301.450 273.600v3.700" stroke="#3cc878" stroke-width="1.100"/></g>
  <g stroke="#5a5a5a" stroke-width="0.800"><rect x="309.800" y="272" width="7.300" height="6.800" rx="1.300" fill="#fff"/><path d="M311.900 272v-1.300h3.100v1.300"/><path d="M311.700 275.400h3.500" stroke="#f45b66" stroke-width="1.200"/></g>
  <g stroke="#5a5a5a" stroke-width="0.800"><rect x="321.800" y="272" width="7.300" height="6.800" rx="1.300" fill="#fff"/><path d="M323.900 272v-1.300h3.100v1.300"/><path d="M323.700 275.400h3.500" stroke="#5fa4ea" stroke-width="1.200"/></g>
  <use href="#i-win" x="335" y="271"/>
 </svg>
 <div class="abs" style="left:0;top:20px;width:340px;height:105.4px;background:#fff;border:1px solid #c8c8c8"></div>
 <span class="abs" style="left:2.9px;top:24px;font-size:6.500px;white-space:nowrap;transform-origin:0 0;transform:scaleX(0.934)">Ergebnisse</span>
 
 <svg class="abs" style="left:306.200px;top:22.500px" width="22" height="10" viewBox="316 0 22 10" fill="none"><use href="#i-clip" x="317.500" y="0"/><g stroke="#444" stroke-width="0.700"><circle cx="333" cy="5" r="2"/><path d="M330 3v-1.500h1.500M336 3v-1.500h-1.500M330 7v1.500h1.500M336 7v1.500h-1.500"/></g></svg>
 <div class="abs" style="left:1px;top:35.1px;width:329px;height:89.4px;overflow:hidden">
  <div class="row g" style="top:-6.7px"><i class="ar" style="left:14.0px;top:4.4px;border-width:2.2px 0 2.2px 3.6px;border-color:transparent transparent transparent #111"></i><svg class="abs" style="left:21.0px;top:1.3px" width="8.2" height="9.100" viewBox="0 0 9 10"><use href="#i-cbo"/></svg><span class="tx" style="left:32.0px;transform-origin:0 0;transform:scaleX(0.890)">(A) Wand.0.5 (IW-1 100) [0/2]</span></div>
  <div class="row" style="top:5.5px"><i class="ar" style="left:14.0px;top:4.4px;border-width:2.2px 0 2.2px 3.6px;border-color:transparent transparent transparent #111"></i><svg class="abs" style="left:21.0px;top:1.3px" width="8.2" height="9.100" viewBox="0 0 9 10"><use href="#i-cbo"/></svg><span class="tx" style="left:32.0px;transform-origin:0 0;transform:scaleX(0.888)">(A) Wand.1.14 (IW-2 150) [0/2]</span></div>
  <div class="row g" style="top:17.7px"><i class="ar" style="left:14.0px;top:4.4px;border-width:2.2px 0 2.2px 3.6px;border-color:transparent transparent transparent #111"></i><svg class="abs" style="left:21.0px;top:1.3px" width="8.2" height="9.100" viewBox="0 0 9 10"><use href="#i-cbo"/></svg><span class="tx" style="left:32.0px;transform-origin:0 0;transform:scaleX(0.890)">(A) Wand.1.2 (IW-1 100) [0/2]</span></div>
  <div class="row" style="top:29.9px"><i class="ar" style="left:14.0px;top:4.4px;border-width:2.2px 0 2.2px 3.6px;border-color:transparent transparent transparent #111"></i><svg class="abs" style="left:21.0px;top:1.3px" width="8.2" height="9.100" viewBox="0 0 9 10"><use href="#i-cbo"/></svg><span class="tx" style="left:32.0px;transform-origin:0 0;transform:scaleX(0.876)">(A) Wand.1.7 (IW-1 100) [0/1]</span></div>
  <div class="row sel" style="top:42.1px"><i class="ar" style="left:13.0px;top:5.1px;border-width:3.4px 2.3px 0 2.3px;border-color:#111 transparent transparent transparent"></i><svg class="abs" style="left:21.0px;top:1.3px" width="8.2" height="9.100" viewBox="0 0 9 10"><use href="#i-cbr"/></svg><span class="tx" style="left:32.0px;transform-origin:0 0;transform:scaleX(0.884)">(A) Wand.0.17 (IW-1 100) [2/2]</span>
   <svg class="abs" style="left:317.600px;top:1.100px" width="10" height="10" viewBox="0 0 10 10" fill="none" stroke="#fff" stroke-width="0.800"><rect x="0" y="0" width="10" height="10" fill="#1d3e73" stroke="none"/><circle cx="5" cy="5" r="2"/><path d="M2 3v-1.500h1.500M8 3v-1.500h-1.500M2 7v1.500h1.500M8 7v1.500h-1.500"/></svg></div>
  <div class="row" style="top:54.3px"><i class="ar" style="left:24.0px;top:4.4px;border-width:2.2px 0 2.2px 3.6px;border-color:transparent transparent transparent #111"></i><svg class="abs" style="left:31.0px;top:1.3px" width="8.2" height="9.100" viewBox="0 0 9 10"><use href="#i-cbr"/></svg><span class="tx" style="left:42.0px;transform-origin:0 0;transform:scaleX(0.873)">Abluft 1 und IW-1 100 [1/1]</span></div>
  <div class="row g" style="top:66.5px"><i class="ar" style="left:24.0px;top:4.4px;border-width:2.2px 0 2.2px 3.6px;border-color:transparent transparent transparent #111"></i><svg class="abs" style="left:31.0px;top:1.3px" width="8.2" height="9.100" viewBox="0 0 9 10"><use href="#i-cbr"/></svg><span class="tx" style="left:42.0px;transform-origin:0 0;transform:scaleX(0.859)">IW-1 100 und Zuluft 1 [1/1]</span></div>
  <div class="row" style="top:78.7px"><i class="ar" style="left:14.0px;top:4.4px;border-width:2.2px 0 2.2px 3.6px;border-color:transparent transparent transparent #111"></i><svg class="abs" style="left:21.0px;top:1.3px" width="8.2" height="9.100" viewBox="0 0 9 10"><use href="#i-cby"/></svg><span class="tx" style="left:32.0px;transform-origin:0 0;transform:scaleX(0.910)">(A) Wand.0.22 (IW-2 150) [0/2]</span></div>
 </div>
 <div class="vline" style="left:305.8px;top:21px;height:103.5px"></div><div class="vline" style="left:317.6px;top:21px;height:103.5px"></div>
 <div class="abs" style="left:330px;top:34.600px;width:9px;height:89.900px;background:#f0f0f0"></div>
 <div class="abs" style="left:330.500px;top:67.200px;width:8.500px;height:48.300px;background:#cdcdcd"></div>
 <svg class="abs" style="left:329.5px;top:20.5px" width="10" height="105" viewBox="0 0 10 105" fill="none" stroke="#444" stroke-width="1.300"><path d="M2.800 19.400l2.200-2.200l2.200 2.200M2.800 98.300l2.200 2.200l2.200-2.200"/></svg>
</div>
<!-- ============ PANEL 4 ============ -->
<div class="panel" style="left:8px;top:397.5px;width:342px;height:106.5px;background:#f5f5f5">
 <svg class="abs" style="left:4.5px;top:5.5px" width="9" height="9" viewBox="0 0 9 9" fill="none" stroke="#333" stroke-width="0.800"><circle cx="4.300" cy="4.500" r="3.200"/><path d="M4.300 4v2.400M4.300 2.600v0.600"/></svg>
 <div class="ptitle" id="t4" style="left:14.8px;top:4.800px;transform-origin:0 0;transform:scaleX(0.929)">INFORMATIONEN</div>
 <svg class="abs" style="left:228px;top:2.2px" width="114" height="14" viewBox="236 401 114 14" fill="none">
  <path d="M241.500 405.500l-2.500 2.500l2.500 2.500" stroke="#111" stroke-width="1.100"/>
  <path d="M248.700 406.300h6.600l-3.300 3.300z" fill="#111"/>
  <path d="M262.500 405.500l2.500 2.500l-2.500 2.500" stroke="#888" stroke-width="0.900"/>
  <path d="M271.900 406.300h6.200l-3.100 3.100z" fill="#8c8c8c"/>
  <path d="M282.500 402v12" stroke="#dcdcdc"/>
  <rect x="284.500" y="402.500" width="11" height="11" fill="#e2e2e2"/>
  <circle cx="288.600" cy="406.300" r="1.800" fill="#444"/><path d="M289.500 407.500l2 2" stroke="#444" stroke-width="1"/><circle cx="292.300" cy="409.400" r="2.600" fill="#6ad821"/>
  <use href="#i-cb" x="299.500" y="403.500"/><use href="#i-cb" x="311" y="403.500"/><use href="#i-cb" x="322" y="403.500"/>
  <use href="#i-win" x="335" y="404"/>
 </svg>
 <span class="abs" id="t4a" style="-webkit-text-stroke:0.08px;left:2.5px;top:23px;font-size:6.500px;white-space:nowrap;transform-origin:0 0;transform:scaleX(0.936)">(A) Wand.0.17 (IW-1 100)</span>
 <div class="abs" style="left:1px;top:48px;width:340px;height:1px;background:#fafafa"></div>
 <div class="abs" style="left:2px;top:36px;width:43px;height:12px;background:#fff;border:1px solid #dcdcdc;border-bottom:none"></div>
 <span class="abs" id="t4b" style="left:3.7px;top:39px;font-size:6.500px;white-space:nowrap;transform-origin:0 0;transform:scaleX(0.969)">Beschreibung</span>
 <div class="abs" style="left:46px;top:38px;width:36px;height:10px;border:1px solid #e2e2e2;border-bottom:none"></div>
 <span class="abs" id="t4c" style="-webkit-text-stroke:0;left:49.5px;top:40px;font-size:6.800px;color:#b4b4b4;white-space:nowrap;transform-origin:0 0;transform:scaleX(0.920)">Hyperlinks</span>
 <div class="abs" style="left:1.5px;top:49.8px;width:337.5px;height:52.2px;background:#fff;border:1px solid #c4c4c4"></div>
</div>
<!--/L2--></div>
<!--DIALOG--><div id="dlg" style="position:absolute;left:358px;top:84px;width:243px;height:411px;background:#f0f0f0;border:1px solid #808080;border-radius:1px;box-shadow:0 2px 9px rgba(0,0,0,.38), 0 0 3px rgba(0,0,0,.2)">
 <div class="abs" style="left:0;top:0;width:241px;height:17px;background:#fff"></div>
 <svg class="abs" style="left:4.5px;top:4.5px" width="9" height="8.100" viewBox="0 0 10 9" fill="none" stroke="#333" stroke-width="0.900"><rect x="0.500" y="0.500" width="9" height="7.500" rx="1"/><circle cx="3" cy="3.800" r="1.100"/><path d="M5.500 3.800h2.500M1.500 6.300h7" stroke-width="0.900"/></svg>
 <span class="abs" id="d0" style="left:16.0px;top:5px;font-size:6.800px;color:#222;white-space:nowrap;transform-origin:0 0;transform:scaleX(0.875)">PROBLEMDETAILS</span>
 <svg class="abs" style="left:228.5px;top:3.8px" width="9" height="9" viewBox="0 0 9 9" stroke="#333" stroke-width="0.900"><path d="M1.500 1.500l5.600 5.600m0-5.600l-5.600 5.600"/></svg>
 <!-- grip -->
 <svg class="abs" style="left:6px;top:23px" width="27" height="8" viewBox="0 0 27 8" fill="#cfcfcf"><g id="gd"><rect x="0" y="0" width="1" height="1"/><rect x="2.200" y="0" width="1" height="1"/><rect x="4.400" y="0" width="1" height="1"/><rect x="6.600" y="0" width="1" height="1"/><rect x="8.800" y="0" width="1" height="1"/><rect x="11" y="0" width="1" height="1"/><rect x="13.200" y="0" width="1" height="1"/><rect x="15.400" y="0" width="1" height="1"/><rect x="17.600" y="0" width="1" height="1"/><rect x="19.800" y="0" width="1" height="1"/><rect x="22" y="0" width="1" height="1"/><rect x="24.200" y="0" width="1" height="1"/></g><use href="#gd" y="2.200"/><use href="#gd" y="4.400"/><use href="#gd" y="6.600"/></svg>
 <svg class="abs" style="left:227px;top:22.5px" width="10" height="10" viewBox="0 0 10 10"><rect x="0.900" y="0.900" width="7.600" height="7.400" rx="0.500" fill="#f6f6f6" stroke="#4a4a4a" stroke-width="0.750"/><path d="M0.900 3.200h7.600" stroke="#4a4a4a" stroke-width="0.750"/></svg>
 <!-- scrollbar -->
 <div class="abs" style="left:231px;top:34px;width:10px;height:375px;background:#f0f0f0"></div>
 <div class="abs" style="left:231px;top:46px;width:10px;height:268px;background:#cdcdcd"></div>
 <svg class="abs" style="left:231px;top:34px" width="10" height="375" viewBox="0 0 10 375" fill="none" stroke="#444" stroke-width="1.300"><path d="M2.800 7.200l2.200-2.200l2.200 2.200M2.800 368.800l2.200 2.200l2.200-2.200"/></svg>
 <!-- Titel -->
 <span class="abs lb" style="left:5.8px;top:43px;transform-origin:0 0;transform:scaleX(1.039)">Titel</span>
 <div class="abs inp" style="left:50px;top:41.500px;width:176px;height:11px"><span style="left:1.3px;top:1.500px;transform-origin:0 0;transform:scaleX(0.966)">Fehlende Aussparung?</span></div>
 <span class="abs lb" style="left:5.8px;top:59px;transform-origin:0 0;transform:scaleX(0.965)">Beschreibung</span>
 <div class="abs inp" style="left:50px;top:58.500px;width:176px;height:34px"><span style="left:1.3px;top:2.500px;transform-origin:0 0;transform:scaleX(0.960)">Wurde hier eine Aussparung vergessen?</span></div>
 <div class="abs" style="left:6.500px;top:71px;width:10px;height:10px;background:#e2e2e2;border:1px solid #d0d0d0"></div>
 <svg class="abs" style="left:9.200px;top:73px" width="5" height="6" viewBox="0 0 5 6" fill="none" stroke="#666" stroke-width="0.600"><path d="M0.500 0.500h2.500l1.500 1.500v3.500h-4z"/><path d="M1.500 3.500l1.500 1l-1.500 1z" fill="#666"/></svg>
 <!-- group Koordination -->
 <div class="abs grp" style="left:5px;top:104.3px;width:223px;height:60.2px"></div>
 <span class="abs lb gl" style="left:7.0px;top:101px;transform-origin:0 0;transform:scaleX(1.026)">Koordination</span>
 <svg class="abs" style="left:13px;top:114px" width="8" height="8" viewBox="0 0 7 7"><use href="#i-x"/></svg>
 <span class="abs lb" style="left:25.7px;top:114.8px;transform-origin:0 0;transform:scaleX(0.972)">Zurückgewiesen (2)</span>
 <div class="abs cmb g" style="left:102px;top:112.300px;width:63px;height:11.600px"><span style="left:2.0px;transform-origin:0 0;transform:scaleX(0.973)">Zurückgewiesen</span><i></i></div>
 <span class="abs lb" style="left:12.0px;top:132.2px;transform-origin:0 0;transform:scaleX(0.855)">Status</span>
 <div class="abs cmb" style="left:31.500px;top:129.600px;width:62px;height:11.800px"><span style="left:0.8px;transform-origin:0 0;transform:scaleX(0.980)">Offen</span><i></i></div>
 <span class="abs lb" style="left:102.0px;top:132.2px;transform-origin:0 0;transform:scaleX(0.898)">BCF-Status</span>
 <div class="abs cmb g" style="left:136.500px;top:129.600px;width:43px;height:11.800px"><span style="left:1.5px;transform-origin:0 0;transform:scaleX(1.045)">Warning</span><i></i></div>
 <span class="abs lb" style="left:12.0px;top:149.8px;transform-origin:0 0;transform:scaleX(0.866)">Phase</span>
 <div class="abs cmb" style="left:31.500px;top:147.300px;width:62px;height:11.800px"><span style="left:0.8px;transform-origin:0 0;transform:scaleX(0.999)">Ausführung</span><i></i></div>
 <span class="abs lb" style="left:102.0px;top:149.8px;transform-origin:0 0;transform:scaleX(1.014)">Fällig bis</span>
 <div class="abs inp" style="left:130px;top:147px;width:69px;height:12.300px;border-color:#9a9a9a"><span style="left:1.6px;top:1.500px;transform-origin:0 0;transform:scaleX(0.948)">05-Jun-2019</span></div>
 <div class="abs" style="left:200.500px;top:147.500px;width:8px;height:11.500px;background:#e6e6e6;border:1px solid #c4c4c4;border-right-color:#9a9a9a;border-bottom-color:#9a9a9a"></div>
 <svg class="abs" style="left:202px;top:151.500px" width="5" height="4" viewBox="0 0 5 4"><path d="M0.500 0.500h4l-2 2.500z" fill="#111"/></svg>
 <!-- group Verantwortlichkeiten -->
 <div class="abs grp" style="left:5px;top:175.700px;width:223px;height:41.300px"></div>
 <span class="abs lb gl" style="left:7.0px;top:173px;transform-origin:0 0;transform:scaleX(0.993)">Verantwortlichkeiten und Bezeichnungen</span>
 <div class="abs tag" style="left:9px;top:183px;width:18.500px;height:13px;background:#22dd33">ARC</div>
 <div class="abs tag" style="left:29.300px;top:183px;width:18.800px;height:13px;background:#1020c8">MEP</div>
 <div class="abs plus" style="left:50.8px;top:184px"></div>
 <div class="abs" style="left:8px;top:198px;width:218px;height:1px;background:#dadada"></div>
 <div class="abs plus" style="left:8.800px;top:202px"></div>
 <!-- tabs -->
 <div class="abs" style="left:4px;top:237.3px;width:226px;height:172.7px;background:#f0f0f0;border-top:1px solid #d4d4d4"></div>
 <div class="abs" style="left:4px;top:224.3px;width:64px;height:14px;background:#fff;border:1px solid #d4d4d4;border-bottom:none"></div>
 <div class="abs" style="left:68px;top:226.3px;width:56px;height:11px;background:#f0f0f0;border:1px solid #d4d4d4;border-bottom:none"></div>
 <svg class="abs" style="left:7px;top:227.3px" width="9" height="8" viewBox="0 0 9 8" fill="none" stroke="#333" stroke-width="0.700"><rect x="0.500" y="0.500" width="6" height="4.500" rx="1.500"/><path d="M2 5v1.500l1.500-1.500"/><path d="M7 2.500c1.500 0.300 1.500 3.500 0 3.800l0.500 1.200l-1.800-1.200h-1.500"/></svg>
 <span class="abs lb" id="d1" style="left:18.5px;top:228.3px;transform-origin:0 0;transform:scaleX(0.994)">Kommunikation</span>
 <svg class="abs" style="left:71px;top:228.3px" width="9" height="8" viewBox="0 0 9 8" fill="none" stroke="#333" stroke-width="0.700"><path d="M0.800 2l3-1.300l4 2v2.500l-3 1.800l-4-2.300z"/><path d="M0.800 2l4 2.300l3-1.600M4.800 4.300v2.700"/></svg>
 <span class="abs lb" id="d2" style="left:81.0px;top:229.3px;transform-origin:0 0;transform:scaleX(0.950)">Komponenten</span>
 <!-- thumbnail -->
 <div class="abs" style="left:40.3px;top:244.2px;width:141.5px;height:107px;background:#fff;border:1px solid #9c9c9c;overflow:hidden"><!--TH--><svg class="abs" style="left:0;top:0" width="141" height="106" viewBox="0 0 141 106">
 <defs><linearGradient id="tWL" x1="0" y1="0" x2="1" y2="0"><stop offset="0" stop-color="#d6d6de"/><stop offset="1" stop-color="#b4b4bc"/></linearGradient>
 <linearGradient id="tWR" x1="0" y1="0" x2="1" y2="0"><stop offset="0" stop-color="#e9e9ef"/><stop offset="0.6" stop-color="#f6f6f9"/><stop offset="1" stop-color="#fff"/></linearGradient></defs>
 <path d="M92 39L134 31L141 80V106H62V50z" fill="url(#tWR)"/>
 <path d="M27.600 7.700V19L38 14L36 12.500z" fill="#d39a58"/>
 <path d="M0 30L59 0H126L133 27.500L134 32L92.500 39.700L78 32.500L75.500 38.500L57.700 26L50 30L24 24L22.500 48L0 42z" fill="#464648"/>
 <path d="M59 0h6v1l-3 0.500z" fill="#c8c8d0"/>
 <path d="M24 24L62.500 50.500V106H17z" fill="url(#tWL)"/>
 <path d="M62.500 50.500L75 46L92 40L92.500 106H62.500z" fill="#f0f0f4"/>
 <path d="M50 30L57.700 26.400L75.700 38.500L66 42z" fill="#77777b"/>
 <path d="M78 32.500L128.600 19.200L134 31L92.500 39.700z" fill="#7b7b7f"/>
 <path d="M77 33.500L94 29l0.500 1l-12 4l-3 2.500z" fill="#e4e45a"/>
 <path d="M86.500 32.500l6-1.500l2 2.500l-6 1.800z" fill="#d9d94a"/>
 <path d="M57.700 18V26.400L75.700 38.500V30z" fill="#a9a9af"/>
 <path d="M26 36L36 33L62 46.500L62 49z" fill="#9a9aa2" fill-opacity="0.600"/>
 <path d="M62 46.500L80 42.500L90 47.500L62.500 51z" fill="#c0c0c8" fill-opacity="0.700"/>
 <path d="M46 27.500L77 46" stroke="#c4c43c" stroke-width="7" stroke-linecap="round"/>
 <path d="M46 27.500L66 39.500" stroke="#a8a81e" stroke-width="7" stroke-linecap="round"/>
 <path d="M46 27.500L52 31" stroke="#dede00" stroke-width="7" stroke-linecap="round"/>
 <path d="M33.500 32.500L66 48" stroke="#c04a50" stroke-width="6.500" stroke-linecap="round"/>
 <path d="M33.500 32.500L55 42.800" stroke="#a4181e" stroke-width="6.500" stroke-linecap="round"/>
 <path d="M33.500 32.500L39 35.200" stroke="#e60008" stroke-width="6.500" stroke-linecap="round"/>
 <path d="M0 35.500h2.500v6h-2.500zM130 27l3.500-1l0.800 5.500l-4 1z" fill="#e8141e"/>
 <path d="M47.400 63.700L77 59L80.500 106H46z" fill="#ecb96b"/>
 <path d="M50.500 65.800L75.800 61.800L76 66L51 69.500z" fill="#6a2911"/>
 <path d="M51.700 72L60 71.200L61 106H52z" fill="#6a2911"/>
 <path d="M64 71L73.800 69.700L76 106H64.500z" fill="#6a2911"/>
 <path d="M82 45h6l1 61h-8z" fill="#e4e4ea"/>
 <path d="M87.700 62.500L93 62L94.500 106H88.500z" fill="#e2c9a2"/>
 <path d="M92 62l1.500 0.500L95 106h-1.500z" fill="#d3ae7c"/>
 <ellipse cx="137.500" cy="100" rx="6.500" ry="3.800" fill="#a6a6ac"/>
 <path d="M139 91l2 1" stroke="#999" stroke-width="0.600"/>
</svg>
<!--/TH--></div>
 <div class="abs sbtn" style="left:185.2px;top:247.8px"></div><div class="abs sbtn" style="left:185.2px;top:261.6px"></div><div class="abs sbtn" style="left:185.2px;top:275.500px;background:#d9d9d9"></div>
 <svg class="abs" style="left:185.2px;top:247.8px" width="11" height="39" viewBox="0 0 11 39" fill="none" stroke="#333" stroke-width="0.700"><circle cx="5.500" cy="5.800" r="2"/><path d="M2.300 3.800v-1.500h1.500M8.700 7.500v1.500h-1.500M2.300 7.500v1.500h1.500"/><circle cx="8.300" cy="2.500" r="1" fill="#2fb457" stroke="none"/><path d="M3 19a2.600 2.600 0 0 1 4.800-1.200M8 19.800a2.600 2.600 0 0 1-4.800 1.200" stroke-width="0.900"/><path d="M8.300 16.500v1.800h-1.800M2.700 22.300v-1.800h1.800" stroke-width="0.700"/><path d="M2.800 30.800l5.400 5.400m0-5.400l-5.400 5.400" stroke="#8a8a8a" stroke-width="0.800"/></svg>
 <!-- comments -->
 <div class="abs nt" style="left:7.300px;top:362.300px">NT</div>
 <div class="abs" style="left:21px;top:362.300px;width:203.500px;height:9.700px;background:#fff;border:1px solid #5a5a5a"></div>
 <div class="abs" style="left:7.300px;top:373.800px;width:217px;height:12px;background:#fff"></div>
 <div class="abs nt" style="left:7.300px;top:374.500px;height:11.300px;line-height:10px">NT</div>
 <span class="abs lb" id="d3" style="left:21.4px;top:375.300px;transform-origin:0 0;transform:scaleX(0.978)">Kollision zwischen Leitung und Wand</span>
 <div class="abs" style="left:210.500px;top:375px;width:12px;height:11px;background:#2a8cec;border:1px solid #1a6cc4;color:#fff;font-size:6px;line-height:9.500px;text-align:center">1</div>
 <div class="abs" style="left:7.300px;top:386.300px;width:217px;height:11.500px;background:#dcdcdc"></div>
 <div class="abs" style="left:7.300px;top:397.800px;width:217px;height:11.200px;background:#fff"></div>
</div>
<!--/DIALOG-->
<div id="winborder" class="abs" style="left:0;top:0;width:1px;height:520px;background:#7d7d7d;z-index:5"></div>
<div class="abs" style="left:0;top:518.6px;width:1000px;height:1.4px;background:#9c9c9c;z-index:5"></div>
<div class="abs" style="left:998.600px;top:0;width:1.400px;height:520px;background:#5c5c5c;z-index:5"></div>
<div class="abs" style="left:0;top:0;width:1000px;height:0.500px;background:#a8a8a8;z-index:5"></div>
<div id="status">
 <span style="left:12.5px;transform-origin:0 0;transform:scaleX(0.910)">Stellen Sie Komponenten durch Klicken transparent dar.</span>
 <span style="left:760.8px;transform-origin:0 0;transform:scaleX(0.913)">Rolle: BIM-Koordination</span>
 <span style="left:855.0px;transform-origin:0 0;transform:scaleX(0.908)">Ausgewählt: 247</span>
</div>
</body>
</html>
